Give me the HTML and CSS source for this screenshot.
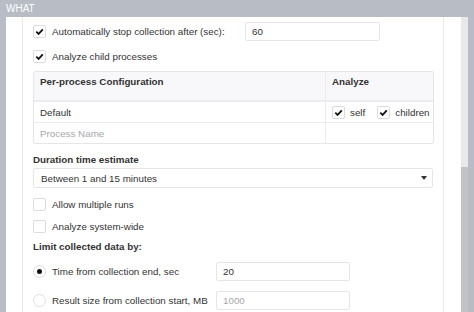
FILE: index.html
```html
<!DOCTYPE html>
<html lang="en">
<head>
    <meta charset="UTF-8">
    <meta name="viewport" content="width=device-width, initial-scale=1.0">
    <title>What</title>
    <link rel="stylesheet" href="styles.css">
</head>
<body>
    <div class="section-title">WHAT</div>
    <div class="frame">
        <div class="panel">
            <div class="gutter"></div>
            <div class="content">
                <div class="row row-first">
                    <span class="check checked"><svg viewBox="0 0 12 12"><path d="M2.5 6.2 L5 8.6 L9.6 3.6" /></svg></span>
                    <span class="label label-stop">Automatically stop collection after (sec):</span>
                    <div class="input input-wide">60</div>
                </div>
                <div class="row">
                    <span class="check checked"><svg viewBox="0 0 12 12"><path d="M2.5 6.2 L5 8.6 L9.6 3.6" /></svg></span>
                    <span class="label">Analyze child processes</span>
                </div>

                <div class="table">
                    <div class="table-head">
                        <div class="cell cell-name">Per-process Configuration</div>
                        <div class="cell cell-analyze">Analyze</div>
                    </div>
                    <div class="table-row">
                        <div class="cell cell-name">Default</div>
                        <div class="cell cell-analyze">
                            <span class="check checked"><svg viewBox="0 0 12 12"><path d="M2.5 6.2 L5 8.6 L9.6 3.6" /></svg></span>
                            <span class="small-label">self</span>
                            <span class="check checked"><svg viewBox="0 0 12 12"><path d="M2.5 6.2 L5 8.6 L9.6 3.6" /></svg></span>
                            <span class="small-label">children</span>
                        </div>
                    </div>
                    <div class="table-row table-row-last">
                        <div class="cell cell-name placeholder">Process Name</div>
                        <div class="cell cell-analyze"></div>
                    </div>
                </div>

                <div class="heading">Duration time estimate</div>
                <div class="select">
                    <span>Between 1 and 15 minutes</span>
                    <span class="caret"></span>
                </div>

                <div class="row row-option">
                    <span class="check"></span>
                    <span class="label">Allow multiple runs</span>
                </div>
                <div class="row row-option-2">
                    <span class="check"></span>
                    <span class="label">Analyze system-wide</span>
                </div>

                <div class="heading heading-limit">Limit collected data by:</div>
                <div class="row row-radio">
                    <span class="radio checked"></span>
                    <span class="label label-radio">Time from collection end, sec</span>
                    <div class="input input-limit">20</div>
                </div>
                <div class="row row-radio-2">
                    <span class="radio"></span>
                    <span class="label label-radio">Result size from collection start, MB</span>
                    <div class="input input-limit placeholder">1000</div>
                </div>
            </div>
            <div class="right-pad"></div>
        </div>
        <div class="scrollbar">
            <div class="scroll-thumb"></div>
        </div>
    </div>
</body>
</html>
```

FILE: styles.css
```css
html, body {
    margin: 0;
    height: 100%;
    overflow: hidden;
}
body {
    background-color: #b7bcc5;
    font-family: "Liberation Sans", Arial, sans-serif;
    font-size: 9.8px;
    color: #333;
}
.section-title {
    height: 17px;
    line-height: 18px;
    padding-left: 6px;
    color: #fff;
    font-size: 10px;
}
.frame {
    display: flex;
    height: 295px;
    margin-left: 6px;
    margin-right: 6px;
}
.panel {
    flex: 1;
    display: flex;
    background-color: #fff;
}
.gutter {
    width: 16px;
    border-right: 1px solid #e8e8ea;
}
.content {
    width: 410px;
    padding-left: 10px;
    border-right: 1px solid #e8e8ea;
}
.right-pad {
    flex: 1;
}
.scrollbar {
    width: 7px;
    background-color: #e9e9eb;
    position: relative;
}
.scroll-thumb {
    position: absolute;
    left: 0;
    right: 0;
    top: 150px;
    bottom: 0;
    background-color: #c1c3c7;
}

/* rows */
.row {
    display: flex;
    align-items: center;
    height: 20px;
    margin-top: 5px;
}
.row-first {
    margin-top: 4px;
}
.label {
    margin-left: 6px;
}
.label-stop {
    width: 193px;
}
.label-radio {
    width: 164px;
}
.check {
    width: 11px;
    height: 11px;
    border: 1px solid #dcdcdf;
    border-radius: 2px;
    background-color: #fff;
    display: inline-flex;
    flex-shrink: 0;
}
.check svg {
    width: 11px;
    height: 11px;
}
.check path {
    fill: none;
    stroke: #111;
    stroke-width: 1.9;
}
.radio {
    width: 11px;
    height: 11px;
    border: 1px solid #e0e0e3;
    border-radius: 50%;
    background-color: #fff;
    display: inline-flex;
    align-items: center;
    justify-content: center;
    flex-shrink: 0;
}
.radio.checked::after {
    content: "";
    width: 5px;
    height: 5px;
    border-radius: 50%;
    background-color: #111;
}
.input {
    height: 17px;
    line-height: 17px;
    border: 1px solid #e6e6e8;
    border-radius: 2px;
    padding-left: 6px;
    box-sizing: content-box;
}
.input-wide {
    width: 127px;
}
.input-limit {
    width: 126px;
}
.placeholder {
    color: #a8a8ab;
}

/* table */
.table {
    width: 399px;
    margin-top: 5px;
    border: 1px solid #e6e6e8;
    border-radius: 2px;
}
.table-head {
    display: flex;
    height: 28px;
    background-color: #f8f8fa;
    border-bottom: 2px solid #ececee;
    font-weight: bold;
}
.table-head .cell {
    align-items: flex-start;
    padding-top: 4px;
}
.table-row {
    display: flex;
    height: 20px;
    border-bottom: 1px solid #ececee;
}
.table-row-last {
    border-bottom: none;
}
.cell {
    display: flex;
    align-items: center;
    padding-left: 6px;
}
.cell-name {
    width: 285px;
    border-right: 1px solid #ececee;
}
.cell-analyze {
    flex: 1;
}
.small-label {
    margin-left: 5px;
    margin-right: 12px;
}
.small-label:last-child {
    margin-right: 0;
}

/* headings and select */
.heading {
    font-weight: bold;
    margin-top: 9px;
    height: 14px;
    line-height: 14px;
}
.heading-limit {
    margin-top: 4px;
}
.select {
    width: 391px;
    height: 18px;
    margin-top: 1px;
    border: 1px solid #e6e6e8;
    border-radius: 2px;
    padding-left: 7px;
    display: flex;
    align-items: center;
    justify-content: space-between;
}
.caret {
    width: 0;
    height: 0;
    border-left: 3px solid transparent;
    border-right: 3px solid transparent;
    border-top: 4px solid #333;
    margin-right: 5px;
}
.row-option {
    margin-top: 6px;
}
.row-option-2 {
    margin-top: 2px;
}
.row-radio {
    margin-top: 7px;
}
.row-radio-2 {
    margin-top: 9px;
}
```
